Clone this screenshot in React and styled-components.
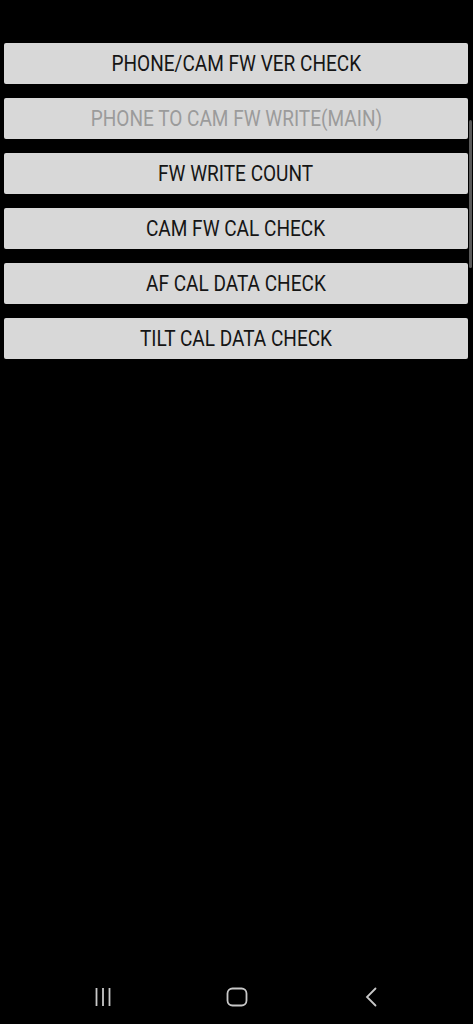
import React from "react";
import styled, { createGlobalStyle } from "styled-components";

const Global = createGlobalStyle`
  html, body { margin: 0; padding: 0; background: #000; }
  body { font-family: Roboto, "Noto Sans", sans-serif; }
  #root { min-height: 100vh; }
`;

const Screen = styled.div`
  position: relative;
  display: flex;
  flex-direction: column;
  height: 1024px;
  background: #000;
  overflow: hidden;
`;

const List = styled.div`
  display: flex;
  flex-direction: column;
  gap: 14px;
  padding: 43px 5px 0 4px;
`;

const Button = styled.button`
  height: 41px;
  border: none;
  border-radius: 2px;
  background: #d8d8d8;
  color: ${(p) => (p.disabled ? "#9b9b9b" : "#151515")};
  font-family: Roboto, "Noto Sans", sans-serif;
  font-size: 22px;
  display: flex;
  align-items: center;
  justify-content: center;
  padding: 0;
  cursor: pointer;
`;

const Label = styled.span`
  display: inline-block;
  transform: scaleX(0.865);
  white-space: nowrap;
  line-height: 1;
  margin-top: 1px;
`;

const ScrollThumb = styled.div`
  position: absolute;
  right: 1px;
  top: 120px;
  width: 3px;
  height: 148px;
  background: #5a5a5a;
  border-radius: 2px;
`;

const NavBar = styled.div`
  margin-top: auto;
  height: 54px;
  display: flex;
  align-items: center;
  justify-content: center;
  gap: 110px;
`;

const NavIcon = styled.div`
  width: 24px;
  height: 24px;
  display: flex;
  align-items: center;
  justify-content: center;
`;

const items = [
  { label: "PHONE/CAM FW VER CHECK" },
  { label: "PHONE TO CAM FW WRITE(MAIN)", disabled: true },
  { label: "FW WRITE COUNT" },
  { label: "CAM FW CAL CHECK" },
  { label: "AF CAL DATA CHECK" },
  { label: "TILT CAL DATA CHECK" },
];

export default function App() {
  return (
    <>
      <Global />
      <Screen>
        <List>
          {items.map((it) => (
            <Button key={it.label} disabled={it.disabled}>
              <Label>{it.label}</Label>
            </Button>
          ))}
        </List>
        <ScrollThumb />
        <NavBar>
          <NavIcon>
            <svg width="20" height="20" viewBox="0 0 20 20" fill="none" stroke="#c8c8c8" strokeWidth="1.8">
              <line x1="3.5" y1="1" x2="3.5" y2="19" />
              <line x1="10" y1="1" x2="10" y2="19" />
              <line x1="16.5" y1="1" x2="16.5" y2="19" />
            </svg>
          </NavIcon>
          <NavIcon>
            <svg width="22" height="20" viewBox="0 0 22 20" fill="none" stroke="#c8c8c8" strokeWidth="1.8">
              <rect x="1.5" y="1.5" width="19" height="17" rx="5" />
            </svg>
          </NavIcon>
          <NavIcon>
            <svg width="14" height="20" viewBox="0 0 14 20" fill="none" stroke="#c8c8c8" strokeWidth="1.8" strokeLinecap="round">
              <polyline points="11.5,1.5 3,10 11.5,18.5" />
            </svg>
          </NavIcon>
        </NavBar>
      </Screen>
    </>
  );
}
